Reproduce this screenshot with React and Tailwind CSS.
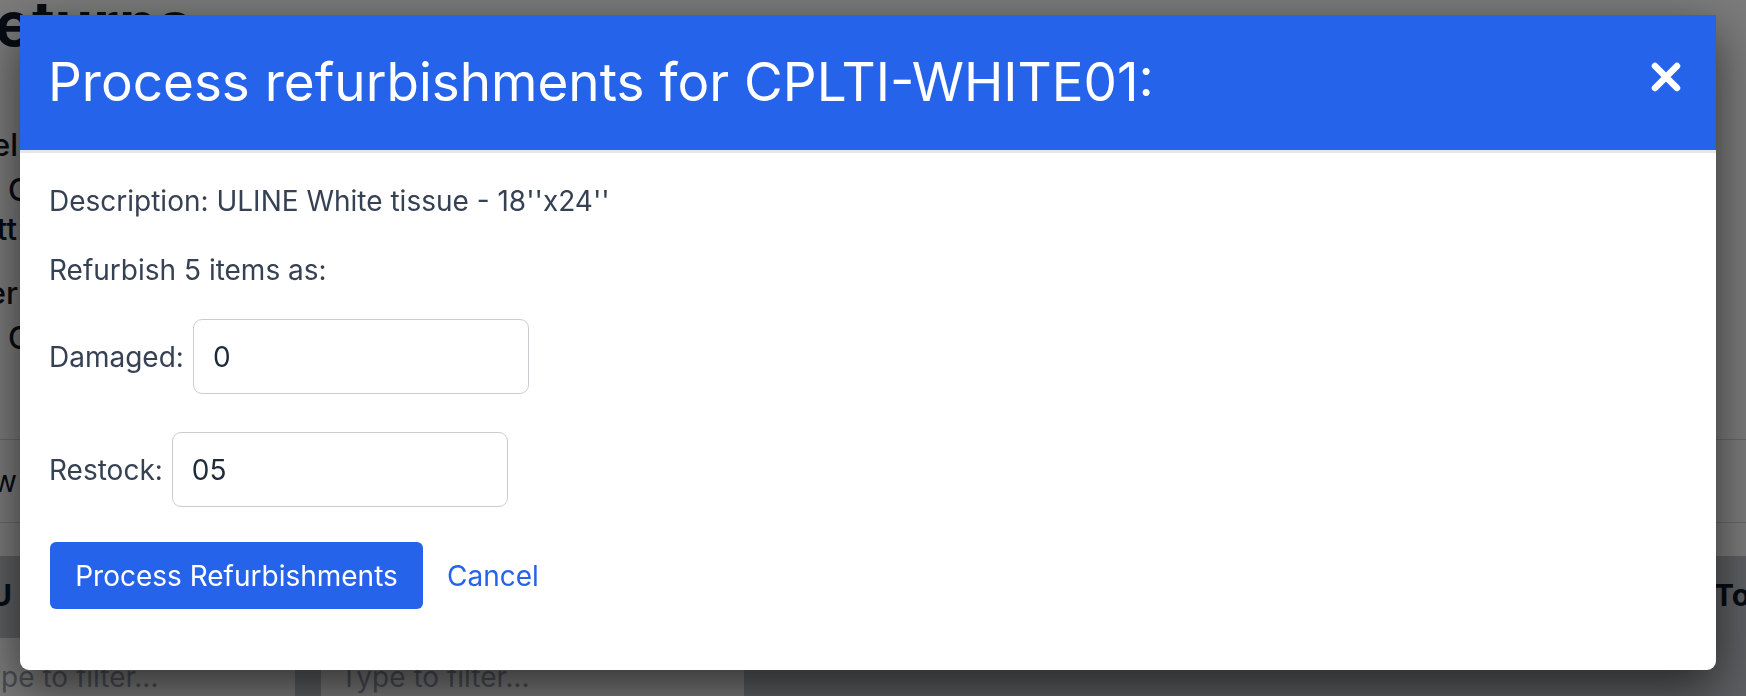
import React, { useState } from 'react';

function CloseIcon() {
  return (
    <svg width="30" height="30" viewBox="0 0 30 30" fill="none" stroke="currentColor" strokeWidth="6.5" strokeLinecap="round">
      <path d="M4 4 L26 26" />
      <path d="M26 4 L4 26" />
    </svg>
  );
}

// page behind the dialog, mostly hidden
function ReturnsPage() {
  return (
    <div className="flex flex-col text-gray-900">
      <h1 className="-mt-[7px] -ml-[45px] whitespace-nowrap text-[62px] font-bold leading-none">Returns</h1>

      <div className="mt-[70px] flex flex-col text-[31px] font-medium leading-[39px]">
        <div className="flex w-[18px] justify-end"><span className="whitespace-nowrap">Label</span></div>
        <div className="mt-[6px] whitespace-nowrap pl-[8px]">CPLTI-WHITE01</div>
        <div className="flex w-[17px] justify-end"><span className="whitespace-nowrap">Scott</span></div>
        <div className="mt-[25px] flex w-[18px] justify-end"><span className="whitespace-nowrap">Customer</span></div>
        <div className="mt-[6px] whitespace-nowrap pl-[8px]">Completed</div>
      </div>

      <div className="mt-[82px] flex h-[84px] items-center border-y-[1.5px] border-gray-300 text-[30px]">
        <div className="flex w-[17px] justify-end"><span className="whitespace-nowrap">Show</span></div>
      </div>

      <div className="mt-[33px] flex flex-col bg-[#c2c5cb]">
        <div className="flex h-[79px] items-center text-[30px] font-bold">
          <div className="flex w-[12px] justify-end"><span className="whitespace-nowrap">SKU</span></div>
          <div className="ml-[1702px] whitespace-nowrap">Total</div>
        </div>
        <div className="-ml-[50px] flex gap-[26px] pt-[3px]">
          <div className="flex h-[78px] w-[345px] items-center bg-white pl-[19px] text-[28px] text-gray-400">Type to filter...</div>
          <div className="flex h-[78px] w-[423px] items-center bg-white pl-[19px] text-[28px] text-gray-400">Type to filter...</div>
        </div>
      </div>
    </div>
  );
}

function RefurbishModal({ sku, description, count }) {
  const [damaged, setDamaged] = useState('0');
  const [restock, setRestock] = useState('05');

  return (
    <div className="fixed inset-0 flex items-start bg-black/[0.52] pl-[20px] pt-[15px]">
      <div className="w-[1696px] rounded-[9px] bg-white shadow-[0_18px_50px_rgba(0,0,0,0.6)]">
        <div className="flex h-[138px] items-center justify-between border-b-[3px] border-gray-200 bg-[#2563eb] pl-[28px] pr-[35px] text-white">
          <h2 className="text-[53px] font-normal leading-none">Process refurbishments for {sku}:</h2>
          <button className="mb-[11px] text-white"><CloseIcon /></button>
        </div>

        <div className="flex flex-col px-[29px] pb-[61px] pt-[28px] text-[28px] leading-[40px] text-gray-700">
          <p>Description: {description}</p>
          <p className="mt-[29px]">Refurbish {count} items as:</p>

          <div className="mt-[29px] flex items-center">
            <label className="mr-[9px]">Damaged:</label>
            <input
              value={damaged}
              onChange={e => setDamaged(e.target.value)}
              className="h-[75px] w-[336px] rounded-[9px] border-[1.5px] border-[#c9ccd2] px-[19px] text-[28px] text-gray-800 outline-none"
            />
          </div>

          <div className="mt-[38px] flex items-center">
            <label className="mr-[9px]">Restock:</label>
            <input
              value={restock}
              onChange={e => setRestock(e.target.value)}
              className="h-[75px] w-[336px] rounded-[9px] border-[1.5px] border-[#c9ccd2] px-[19px] text-[28px] text-gray-800 outline-none"
            />
          </div>

          <div className="mt-[35px] flex items-center">
            <button className="ml-[1px] flex h-[67px] w-[373px] items-center justify-center rounded-[6px] bg-[#2563eb] text-[28px] text-white">
              Process Refurbishments
            </button>
            <button className="ml-[24px] text-[28px] text-[#2563eb]">Cancel</button>
          </div>
        </div>
      </div>
    </div>
  );
}

export default function App() {
  return (
    <div className="relative h-[696px] w-full overflow-hidden bg-white font-['Inter',sans-serif]">
      <ReturnsPage />
      <RefurbishModal sku="CPLTI-WHITE01" description="ULINE White tissue - 18''x24''" count={5} />
    </div>
  );
}
